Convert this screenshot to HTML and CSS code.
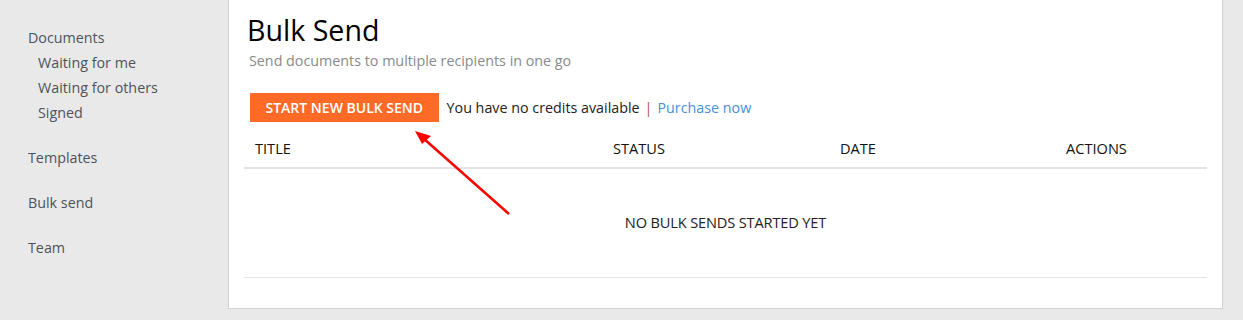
FILE: index.html
```html
<!DOCTYPE html>
<html lang="en">
<head>
  <meta charset="UTF-8">
  <title>Bulk Send</title>
  <link rel="stylesheet" href="styles.css">
</head>
<body>
  <div class="layout">
    <nav class="sidebar">
      <div class="nav-group">
        <a class="nav-item">Documents</a>
        <a class="nav-sub">Waiting for me</a>
        <a class="nav-sub">Waiting for others</a>
        <a class="nav-sub">Signed</a>
      </div>
      <div class="nav-group">
        <a class="nav-item">Templates</a>
      </div>
      <div class="nav-group">
        <a class="nav-item">Bulk send</a>
      </div>
      <div class="nav-group">
        <a class="nav-item">Team</a>
      </div>
    </nav>

    <main class="panel">
      <h1>Bulk Send</h1>
      <p class="subtitle">Send documents to multiple recipients in one go</p>

      <div class="toolbar">
        <button class="start-btn">START NEW BULK SEND</button>
        <span class="credits">You have no credits available</span>
        <span class="sep">|</span>
        <a class="purchase">Purchase now</a>
      </div>

      <div class="table">
        <div class="table-head">
          <div>TITLE</div>
          <div>STATUS</div>
          <div>DATE</div>
          <div>ACTIONS</div>
        </div>
        <div class="table-empty">NO BULK SENDS STARTED YET</div>
      </div>

      <svg class="arrow" width="110" height="95" viewBox="0 0 110 95">
        <line x1="100" y1="87" x2="14" y2="11" stroke="#ff0000" stroke-width="2.5"/>
        <polygon points="6,4 22,9 13,17" fill="#ff0000"/>
      </svg>
    </main>
  </div>
</body>
</html>
```

FILE: styles.css
```css
body {
  margin: 0;
  background: #e9e9e9;
  font-family: "Open Sans", Arial, sans-serif;
  font-size: 14.3px;
  color: #333;
}
.layout {
  display: flex;
  align-items: flex-start;
}
.sidebar {
  width: 228px;
  flex-shrink: 0;
  padding-top: 25px;
}
.nav-group {
  display: flex;
  flex-direction: column;
  margin-bottom: 20px;
}
.nav-item,
.nav-sub {
  line-height: 25px;
  color: #4d535a;
  padding-left: 28px;
}
.nav-sub {
  padding-left: 38px;
}
.panel {
  position: relative;
  width: 963px;
  background: #fff;
  border: 1px solid #d2d2d2;
  border-top: none;
  padding: 12px 15px 30px 15px;
}
h1 {
  margin: 0 0 3px 3px;
  font-size: 28.6px;
  line-height: 36px;
  font-weight: normal;
  color: #000;
}
.subtitle {
  margin: 0 0 22px 5px;
  line-height: 20px;
  color: #8a8a8a;
}
.toolbar {
  display: flex;
  align-items: center;
  margin-left: 6px;
  height: 29px;
}
.start-btn {
  height: 29px;
  padding: 0 15.5px;
  border: none;
  background: #ff6a26;
  color: #fff;
  font-family: inherit;
  font-size: 14px;
  font-weight: 600;
}
.credits {
  margin-left: 8px;
  color: #222;
}
.sep {
  margin: 0 5px;
  color: #b0513e;
}
.purchase {
  color: #4a8fd9;
}
.table-head {
  display: grid;
  grid-template-columns: 358px 227px 226px 1fr;
  height: 39px;
  padding-top: 4px;
  align-items: center;
  border-bottom: 2px solid #e4e4e4;
  margin-top: 2px;
  font-size: 14.6px;
  color: #111;
}
.table-head div {
  padding-left: 11px;
}
.table-empty {
  height: 106px;
  padding-bottom: 2px;
  line-height: 106px;
  text-align: center;
  border-bottom: 1px solid #e4e4e4;
  font-size: 14.6px;
  letter-spacing: -0.15px;
  color: #222;
}
.arrow {
  position: absolute;
  left: 180px;
  top: 127px;
}
```
